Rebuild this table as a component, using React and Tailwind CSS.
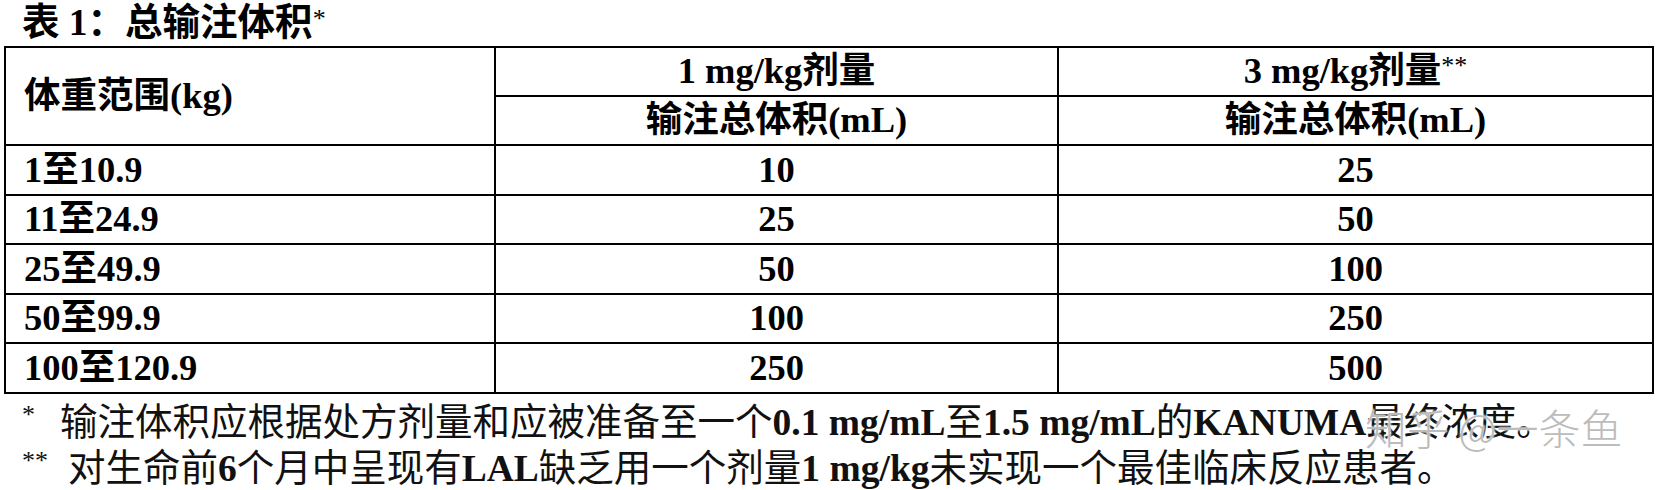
import React from 'react';

const rows = [
    ['1至10.9', '10', '25'],
    ['11至24.9', '25', '50'],
    ['25至49.9', '50', '100'],
    ['50至99.9', '100', '250'],
    ['100至120.9', '250', '500'],
];

const serif = "font-['Liberation_Serif','Noto_Sans_CJK_SC',serif]";

const App = () => {
    return (
        <div className={`relative w-[1657px] h-[490px] bg-white text-black ${serif}`}>
            {/* title */}
            <div className="h-[46px] pl-[22px] flex items-center">
                <span className="text-[37.5px] font-bold leading-none">表 1：总输注体积</span>
                <span className="text-[26px] leading-none -mt-[8px]">*</span>
            </div>

            <table className="ml-[4px] border-collapse table-fixed w-[1648px] text-[36.5px] font-bold leading-none">
                <colgroup>
                    <col className="w-[490px]" />
                    <col className="w-[563px]" />
                    <col className="w-[595px]" />
                </colgroup>
                <thead>
                    <tr className="h-[49px]">
                        <th rowSpan={2} className="border-2 border-black text-left pl-[18px] font-bold">体重范围(kg)</th>
                        <th className="border-2 border-black text-center font-bold">1 mg/kg剂量</th>
                        <th className="border-2 border-black text-center font-bold">
                            3 mg/kg剂量<span className="text-[26px] font-normal align-top">**</span>
                        </th>
                    </tr>
                    <tr className="h-[49px]">
                        <th className="border-2 border-black text-center font-bold">输注总体积(mL)</th>
                        <th className="border-2 border-black text-center font-bold">输注总体积(mL)</th>
                    </tr>
                </thead>
                <tbody>
                    {rows.map(([range, low, high]) => (
                        <tr key={range} className="h-[49.6px]">
                            <td className="border-2 border-black pl-[18px]">{range}</td>
                            <td className="border-2 border-black text-center">{low}</td>
                            <td className="border-2 border-black text-center">{high}</td>
                        </tr>
                    ))}
                </tbody>
            </table>

            {/* footnotes */}
            <div className="pl-[22px] pt-[6px] text-[37.5px] leading-[46px] font-normal text-[#111]">
                <div className="flex items-start">
                    <span className="w-[38px] text-[26px] leading-[30px]">*</span>
                    <span>
                        输注体积应根据处方剂量和应被准备至一个<b>0.1 mg/mL</b>至<b>1.5 mg/mL</b>的<b>KANUMA</b>最终浓度。
                    </span>
                </div>
                <div className="flex items-start">
                    <span className="w-[46px] text-[26px] leading-[30px]">**</span>
                    <span>
                        对生命前<b>6</b>个月中呈现有<b>LAL</b>缺乏用一个剂量<b>1 mg/kg</b>未实现一个最佳临床反应患者。
                    </span>
                </div>
            </div>

            {/* watermark */}
            <div className="absolute left-[1365px] top-[406px] text-[42px] text-[#bcbcbc] font-['Noto_Sans_CJK_SC',sans-serif] font-light leading-none pointer-events-none [text-shadow:0_0_3px_#fff,0_0_2px_#fff]">
                知乎 @一条鱼
            </div>
        </div>
    );
};

export default App;
